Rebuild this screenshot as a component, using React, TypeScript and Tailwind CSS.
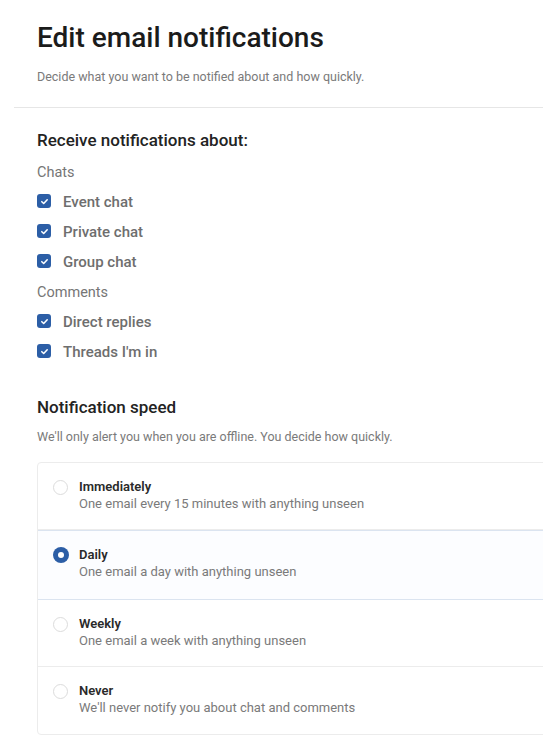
import React from "react";

const chats = ["Event chat", "Private chat", "Group chat"];
const comments = ["Direct replies", "Threads I'm in"];

const speeds = [
  { title: "Immediately", desc: "One email every 15 minutes with anything unseen" },
  { title: "Daily", desc: "One email a day with anything unseen" },
  { title: "Weekly", desc: "One email a week with anything unseen" },
  { title: "Never", desc: "We'll never notify you about chat and comments" },
];

function CheckRow({ label }: { label: string }) {
  return (
    <label className="flex h-[30px] items-center">
      <span className="-mt-[2px] flex h-[14px] w-[14px] items-center justify-center rounded-[3px] bg-[#2c5ea6]">
        <svg width="9" height="9" viewBox="0 0 10 10" fill="none">
          <path d="M2 5.2 L4.1 7.2 L8 3" stroke="#fff" strokeWidth="1.7" strokeLinecap="round" strokeLinejoin="round" />
        </svg>
      </span>
      <span className="ml-[12px] text-[15px] font-medium leading-[20px] text-[#6e6e6e]">{label}</span>
    </label>
  );
}

function SpeedRow({ title, desc, selected, last }: { title: string; desc: string; selected: boolean; last: boolean }) {
  return (
    <div
      className={
        selected
          ? "flex h-[70px] items-start border-y border-[#dbe4f0] bg-[#fcfdff] px-[15px] pt-[16px]"
          : last
          ? "flex h-[67px] items-start px-[15px] pt-[16px]"
          : "flex h-[67px] items-start border-b border-[#ececec] px-[15px] pt-[16px]"
      }
    >
      {selected ? (
        <span className="flex h-[16px] w-[16px] shrink-0 items-center justify-center rounded-full bg-[#2c5ea6]">
          <span className="h-[6px] w-[6px] rounded-full bg-white" />
        </span>
      ) : (
        <span className="mt-[1px] h-[15px] w-[15px] shrink-0 rounded-full border border-[#dcdcdc] bg-white" />
      )}
      <div className={selected ? "ml-[10px]" : "ml-[11px]"}>
        <div className="text-[13px] font-semibold leading-[16px] text-[#2a2a2a]">{title}</div>
        <div className="text-[13px] leading-[18px] text-[#7a7a7a]">{desc}</div>
      </div>
    </div>
  );
}

export default function App() {
  return (
    <div
      className="min-h-[751px] w-[543px] overflow-hidden bg-white"
      style={{ fontFamily: "Roboto, 'Noto Sans', 'Liberation Sans', sans-serif" }}
    >
      <div className="ml-[14px] border-b border-[#e6e6e6] pb-[22px] pl-[23px] pt-[21px]">
        <h1 className="text-[28px] font-medium leading-[34px] text-[#1b1b1b]">Edit email notifications</h1>
        <p className="mt-[14px] text-[12.5px] leading-[16px] text-[#7a7a7a]">
          Decide what you want to be notified about and how quickly.
        </p>
      </div>

      <div className="pl-[37px]">
        <h2 className="mt-[22px] text-[17px] font-medium leading-[20px] text-[#232323]">Receive notifications about:</h2>
        <div className="mt-[13px] text-[14.5px] leading-[20px] text-[#767676]">Chats</div>
        <div className="mt-[4px] flex flex-col">
          {chats.map((c) => (
            <CheckRow key={c} label={c} />
          ))}
        </div>
        <div className="mt-[6px] text-[14.5px] leading-[20px] text-[#767676]">Comments</div>
        <div className="mt-[4px] flex flex-col">
          {comments.map((c) => (
            <CheckRow key={c} label={c} />
          ))}
        </div>

        <h2 className="mt-[30px] text-[17px] font-medium leading-[20px] text-[#232323]">Notification speed</h2>
        <p className="mt-[12px] text-[12.5px] leading-[16px] text-[#7a7a7a]">
          We'll only alert you when you are offline. You decide how quickly.
        </p>

        <div className="mt-[17px] w-[560px] rounded-[4px] border border-[#ececec]">
          {speeds.map((s, i) => (
            <SpeedRow key={s.title} title={s.title} desc={s.desc} selected={i === 1} last={i === speeds.length - 1} />
          ))}
        </div>
      </div>
    </div>
  );
}
